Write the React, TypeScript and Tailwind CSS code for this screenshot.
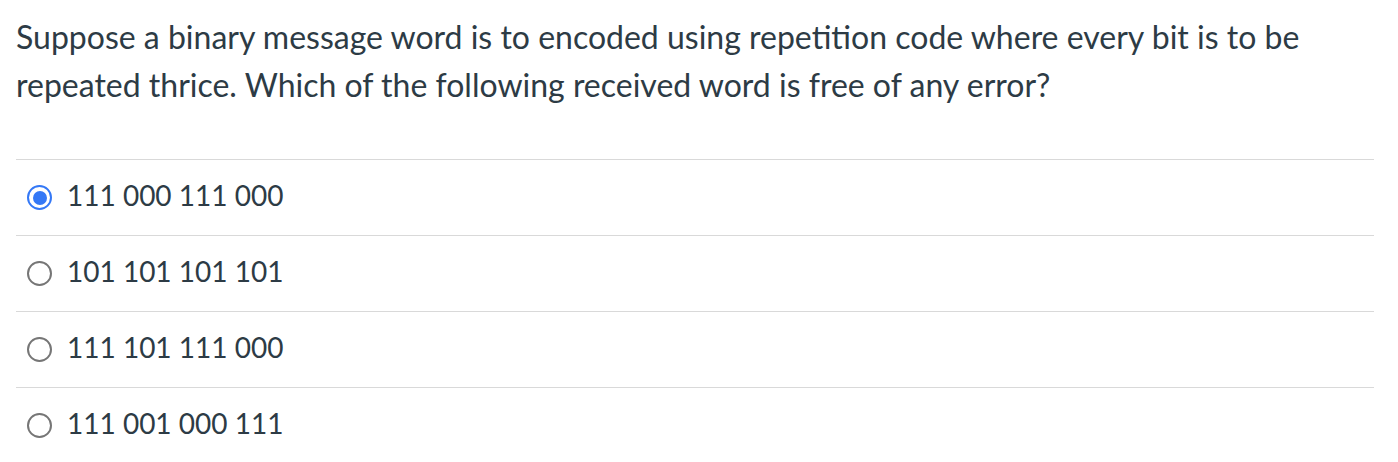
import React from 'react';

const answers = [
  { id: 'a1', label: '111 000 111 000', checked: true },
  { id: 'a2', label: '101 101 101 101', checked: false },
  { id: 'a3', label: '111 101 111 000', checked: false },
  { id: 'a4', label: '111 001 000 111', checked: false },
];

const Radio: React.FC<{ checked: boolean }> = ({ checked }) =>
  checked ? (
    <span className="flex h-[25px] w-[25px] shrink-0 items-center justify-center rounded-full border-[2.5px] border-[#3478f6]">
      <span className="h-[14px] w-[14px] rounded-full bg-[#3478f6]" />
    </span>
  ) : (
    <span className="h-[25px] w-[25px] shrink-0 rounded-full border-2 border-[#767676]" />
  );

export default function App() {
  return (
    <div className="min-h-[462px] bg-white font-['Lato','Liberation_Sans',sans-serif] text-[#2d3b45]">
      <div className="w-[1358px] ml-4">
        <p className="pt-[13px] text-[32px] leading-[48px]">
          Suppose a binary message word is to encoded using repetition code where every bit is to be repeated thrice. Which of the following received word is free of any error?
        </p>
        <div className="mt-[50px]">
          {answers.map((a) => (
            <div key={a.id} className="flex h-[76px] items-center gap-[15px] border-t border-[#d9d9d9] pl-[11px]">
              <Radio checked={a.checked} />
              <span className="pb-[5px] text-[28px]">{a.label}</span>
            </div>
          ))}
        </div>
      </div>
    </div>
  );
}
